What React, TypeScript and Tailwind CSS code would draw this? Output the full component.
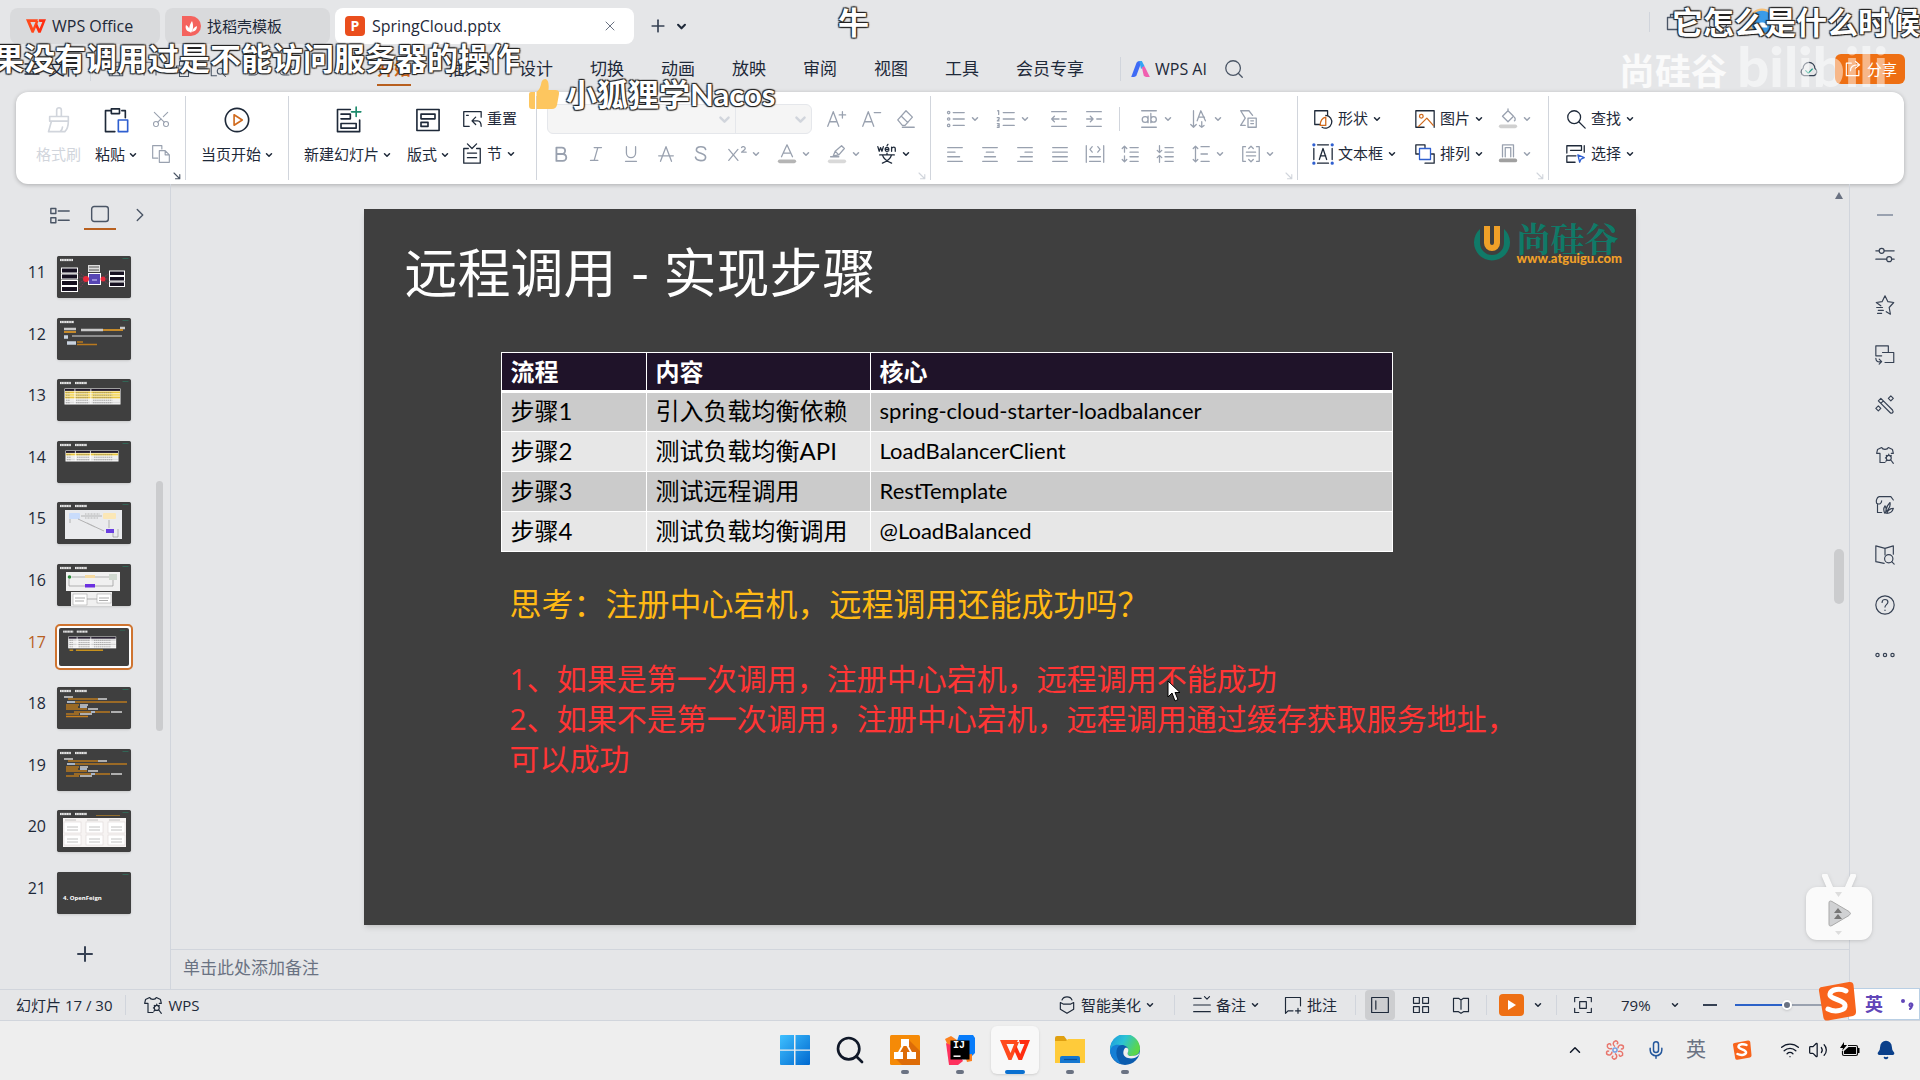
import type { ReactNode } from 'react';
import { Bell, ChevronRight, ChevronUp, Mic, Plus, Scissors, Search, Volume2, Wifi, X } from 'lucide-react';

const menuTabs = ['插入', '设计', '切换', '动画', '放映', '审阅', '视图', '工具'];

const steps = [
  { step: '步骤1', content: '引入负载均衡依赖', core: 'spring-cloud-starter-loadbalancer' },
  { step: '步骤2', content: '测试负载均衡API', core: 'LoadBalancerClient' },
  { step: '步骤3', content: '测试远程调用', core: 'RestTemplate' },
  { step: '步骤4', content: '测试负载均衡调用', core: '@LoadBalanced' },
];

interface IconProps {
  children: ReactNode;
  className?: string;
  box?: number;
}

function Icon({ children, className = 'size-6', box = 24 }: IconProps) {
  return (
    <svg
      viewBox={`0 0 ${box} ${box}`}
      className={`shrink-0 ${className}`}
      fill="none"
      stroke="currentColor"
      strokeWidth="1.4"
      strokeLinecap="round"
      strokeLinejoin="round"
      aria-hidden="true"
    >
      {children}
    </svg>
  );
}

function Caret({ className = 'size-2' }: { className?: string }) {
  return (
    <Icon box={8} className={className}>
      <path d="M1.5 2.8 4 5.3 6.5 2.8" strokeWidth="1.5" />
    </Icon>
  );
}

function Launcher({ dark = false }: { dark?: boolean }) {
  return (
    <button aria-label="更多设置" className={`absolute right-1 bottom-0 ${dark ? 'text-gray-600' : 'text-gray-300'}`}>
      <Icon box={8} className="size-2">
        <path d="M1 1l5.5 5.5M6.8 2.5v4.3H2.5" strokeWidth="1.1" />
      </Icon>
    </button>
  );
}

/* one-slot toolbar button, 35px wide; the one with a caret takes 50px */
function Tool({ label, children }: { label: string; children: ReactNode }) {
  return (
    <button aria-label={label} className="flex h-[35px] w-[35px] items-center justify-center">
      <Icon className="size-[22px]">{children}</Icon>
    </button>
  );
}

function DropTool({ label, children, dark = false }: { label: string; children: ReactNode; dark?: boolean }) {
  return (
    <button
      aria-label={label}
      className={`flex h-[35px] w-[50px] items-center gap-1 pl-2 ${dark ? 'text-gray-800' : ''}`}
    >
      <Icon className="size-[22px]">{children}</Icon>
      <Caret />
    </button>
  );
}

function TextTool({ label, children, caret = true }: { label: string; children: ReactNode; caret?: boolean }) {
  return (
    <button className="flex h-[35px] items-center gap-1 whitespace-nowrap">
      <Icon className="size-[22px]">{children}</Icon>
      <span>{label}</span>
      {caret && <Caret className="ml-px size-2" />}
    </button>
  );
}

function BigTool({ label, children, caret = true, muted = false }: { label: string; children: ReactNode; caret?: boolean; muted?: boolean }) {
  return (
    <button className={`flex flex-col items-center whitespace-nowrap ${muted ? 'text-gray-300' : ''}`}>
      <span className="flex h-[37px] items-center">
        <Icon className="size-[28px]">{children}</Icon>
      </span>
      <span className="flex h-[33px] items-center gap-1">
        {label}
        {caret && <Caret />}
      </span>
    </button>
  );
}

function WpsLogo({ className }: { className: string }) {
  return (
    <svg viewBox="0 0 30 20" className={className} aria-hidden="true">
      <path d="M0 0h18l-2 4H6.500l4 9 4.500-11h4l-7.500 18H8.500z" fill="#ff4a1c" />
      <path d="M19 0h11l-8 20h-3.500l-4-9 2-5 3.700 8L24.500 4H20z" fill="#ff2d10" />
    </svg>
  );
}

function SogouLogo({ className }: { className: string }) {
  return (
    <svg viewBox="0 0 40 40" className={className} aria-hidden="true">
      <path d="M5 6 32 1q4-.6 4.500 3L39 30q.4 4-3 5L11 39.500q-4 .6-4.600-3L2 10q-.5-3.500 3-4z" fill="#f8641c" />
      <path d="M29 10c-6-3-15-2-16 3s14 6 15 11-9 8-17 4" fill="none" stroke="#fff" strokeWidth="5" strokeLinecap="round" />
    </svg>
  );
}

function Skin() {
  return (
    <>
      <path d="M8 3 3 5.500 2 10h4v11h6M16 3l5 2.500L22 10h-2.500M8 3c1 3 7 3 8 0" />
      <circle cx="16.500" cy="15.500" r="3" />
      <path d="M16.500 11v1.500M12.500 15.500h1M19 18l3 4M13.500 12.500l1 1M19.500 12.500l-1 1M14 18.500l-1 1" />
    </>
  );
}

/* ---------- slide thumbnails ---------- */

function CodeLines({ extra }: { extra: boolean }) {
  return (
    <g>
      <path d="M7 10h9M41 12h9M23 18h8M31 22h10M54 25h11M23 27h12" stroke="#d5d5d5" strokeWidth="1.600" />
      <path d="M11 12h30M18 15h52M9 18h13M9 20h12M9 22h21M17 25h36M9 27h13" stroke="#b9791f" strokeWidth="1.500" />
      {extra && <path d="M9 29.500h22" stroke="#c8801e" strokeWidth="1.600" />}
      <path d="M10 15h8M23 20h7M34 25h4" stroke="#a9b4c4" strokeWidth="2" />
    </g>
  );
}

function MiniTable({ x, w, y, h, rows }: { x: number; w: number; y: number; h: number; rows: string[] }) {
  const rowHeight = h / rows.length;
  return (
    <g>
      <rect x={x - 0.5} y={y - 0.5} width={w + 1} height={h + 1} fill="#fff" />
      {rows.map((fill, i) => (
        <rect key={i} x={x} y={y + i * rowHeight} width={w} height={rowHeight - 0.6} fill={fill} />
      ))}
      {rows.slice(1).map((_, i) => (
        <path
          key={i}
          d={`M${x + 1} ${y + (i + 1.5) * rowHeight}h4m6 0h12m5 0h${w * 0.35}`}
          stroke="#777"
          strokeWidth=".6"
          strokeDasharray="1.500 .6"
        />
      ))}
      <path d={`M${x + w * 0.18} ${y}v${h}M${x + w * 0.47} ${y}v${h}`} stroke="#fff" strokeWidth=".8" />
    </g>
  );
}

const thumbs: { no: number; title: number; art: ReactNode }[] = [
  {
    no: 11,
    title: 13,
    art: (
      <g>
        <path d="M22 16l8 7M22 21l8 2M22 27l8-4M22 33l8-10M44 23l9-6M44 23h9M44 23l9 6" stroke="#a33a6a" strokeWidth=".6" strokeDasharray="1.500 1" />
        {[12, 18, 24.5, 30.5].map((y) => (
          <rect key={y} x="4.500" y={y} width="16" height="5" fill="#151020" stroke="#fff" />
        ))}
        {[15, 20.5, 26].map((y) => (
          <rect key={y} x="52.500" y={y} width="15" height="4.500" fill="#151020" stroke="#fff" />
        ))}
        <rect x="31" y="9" width="12" height="7" fill="#ddd" />
        <path d="M32 11h10M32 14h10" stroke="#555" />
        <rect x="31.500" y="17.500" width="12" height="11" fill="#5746b4" stroke="#fff" />
        <path d="M35 24h5" stroke="#d8d0ff" />
        <circle cx="29" cy="23" r="3" fill="#e8283a" />
        <circle cx="46" cy="23" r="2.500" fill="#e8283a" />
      </g>
    ),
  },
  {
    no: 12,
    title: 14,
    art: (
      <g>
        <path d="M7 11h12M24 12h22M63 10h5" stroke="#c9c9c9" strokeWidth="2.500" />
        <path d="M7 14h12M46 12h20" stroke="#c58a2b" strokeWidth="2" />
        <path d="M15 18h50" stroke="#8c8c8c" strokeWidth="2" />
        <path d="M7 19h4M10 25h9" stroke="#c9d3e0" strokeWidth="3.500" />
        <path d="M20 24h6M20 26.500h20" stroke="#b9791f" strokeWidth="1.300" />
      </g>
    ),
  },
  { no: 13, title: 28, art: <MiniTable x={8} w={55} y={10} h={15} rows={['#221a2c', '#e9c63f', '#f5dc72', '#e9c63f', '#eee', '#ddd']} /> },
  { no: 14, title: 28, art: <MiniTable x={9} w={52} y={10} h={10} rows={['#221a2c', '#e9c63f', '#eee', '#ddd']} /> },
  {
    no: 15,
    title: 28,
    art: (
      <g>
        <rect x="8" y="8" width="57" height="29" fill="#eaebed" />
        <rect x="12" y="11" width="11" height="6" rx="1" fill="#c9dcfb" />
        <rect x="46" y="11" width="13" height="6" rx="1" fill="#fbe7b6" />
        <rect x="49" y="27" width="8" height="4" fill="#6a3fe0" />
        <path d="M24 14h21M52 18v8M21 17l26 12M13 17v4M56 31v4h5v-8" stroke="#999" strokeWidth=".7" />
        <path d="M28 12h15M28 16h13M30 21l8 4" stroke="#b5b5b5" strokeDasharray="1 .5" />
      </g>
    ),
  },
  {
    no: 16,
    title: 28,
    art: (
      <g>
        <rect x="9" y="8" width="54" height="19" fill="#f0f0f0" />
        <rect x="14" y="28" width="41" height="14" fill="#f0f0f0" />
        <circle cx="12.500" cy="13" r="1.800" fill="#2a8a3a" />
        <path d="M15 13h13M37 13h15M56 16v6H38M28 22H12v-7M30 35h10" stroke="#888" strokeWidth=".6" />
        <rect x="28" y="11" width="10" height="3" fill="#f4d9a0" />
        <rect x="28" y="20" width="10" height="3.500" fill="#6a2fe0" />
        <rect x="52" y="10" width="8" height="6" fill="#cfd8cf" />
        <rect x="16" y="30" width="14" height="11" stroke="#999" strokeWidth=".5" fill="#fff" />
        <rect x="40" y="30" width="14" height="9" stroke="#999" strokeWidth=".5" fill="#fff" />
        <path d="M18 34h10M18 37h9M42 34h10M42 36.500h9" stroke="#888" strokeWidth=".7" />
      </g>
    ),
  },
  {
    no: 17,
    title: 28,
    art: (
      <g>
        <MiniTable x={9} w={52} y={10} h={12} rows={['#221a2c', '#d5d5d5', '#eee', '#d5d5d5', '#eee']} />
        <path d="M10 24.500h4M17 24.500h30" stroke="#c8921e" strokeWidth="1.600" />
      </g>
    ),
  },
  { no: 18, title: 28, art: <CodeLines extra /> },
  { no: 19, title: 28, art: <CodeLines extra={false} /> },
  {
    no: 20,
    title: 28,
    art: (
      <g>
        <path d="M39 5.500h24" stroke="#a87a2a" strokeWidth=".8" />
        <rect x="6" y="8" width="63" height="29" fill="#f7f4f3" />
        {[7, 29, 51].map((x) => (
          <g key={x} fill="#fff" stroke="#d8cfcf" strokeWidth=".5">
            <rect x={x} y="12" width="17" height="11" />
            <rect x={x} y="25" width="17" height="10" />
            <path d={`M${x + 1} 10h11M${x + 3} 17h11m-11 3h11m-11 9h11m-11 3h11`} stroke="#bbb" strokeWidth=".9" />
          </g>
        ))}
      </g>
    ),
  },
  { no: 21, title: 0, art: null },
];

function Thumb({ no, title, art }: { no: number; title: number; art: ReactNode }) {
  const current = no === 17;
  return (
    <li className="flex items-center gap-[11px]">
      <span className={`w-[46px] pb-[10px] text-right ${current ? 'text-[#b8601f]' : 'text-gray-800'}`}>{no}</span>
      <button
        aria-label={`幻灯片 ${no}`}
        className={`relative h-[42px] w-[74px] rounded-[3px] shadow ${
          current ? 'bg-white p-[2px] outline-2 outline-[#cf7430]' : 'bg-[#3f3f3f]'
        }`}
      >
        <svg viewBox="0 0 74 42" className="size-full rounded-[2px] bg-[#3f3f3f]" fill="none" aria-hidden="true">
          {title > 0 && (
            <>
              <path d={title > 20 ? 'M3 4h11M18 4h12' : `M3 4h${title}`} stroke="#8a8a8a" strokeWidth="2.600" />
              <path d={title > 20 ? 'M3 4h11M18 4h12' : `M3 4h${title}`} stroke="#e8e8e8" strokeWidth="2" strokeDasharray="1.200 .5" />
            </>
          )}
          <path d="M65.500 2.500h6" stroke="#2f6f5c" strokeWidth=".8" />
          {art}
        </svg>
        {no === 21 && (
          <span className="absolute bottom-3 left-[6px] text-[6px] leading-[8px] font-bold text-white">4. OpenFeign</span>
        )}
      </button>
    </li>
  );
}

/* ---------- header ---------- */

function TitleBar() {
  return (
    <header className="flex h-12 items-end pr-8 pl-[10px] text-[15px]">
      <div className="flex h-10 gap-[5px] pb-1">
        <button className="flex h-9 w-[150px] items-center gap-[6px] rounded-lg bg-[#d9dadc] px-4 text-base">
          <WpsLogo className="h-[14px] w-5" />
          WPS Office
        </button>
        <button className="flex h-9 w-[165px] items-center gap-[6px] rounded-lg bg-[#d9dadc] px-4">
          <svg viewBox="0 0 20 20" className="size-5" aria-hidden="true">
            <path d="M1 0h9a10 10 0 0 1 0 20H1z" fill="#f4635e" />
            <path d="M10 17c-3-3-2-7 1-12 2 5 1 9-1 12zM9 16c-4-1-5-4-4-7 3 2 4 4 4 7zM11 16c1-4 3-5 5-6 0 4-2 5-5 6z" fill="#fff" />
          </svg>
          找稻壳模板
        </button>
        <button className="flex h-9 w-[299px] items-center gap-[7px] rounded-lg bg-white pr-4 pl-[10px] text-base">
          <span className="flex size-5 items-center justify-center rounded-sm bg-[#ea4e1d] text-sm font-bold text-white">P</span>
          SpringCloud.pptx
          <X className="ml-auto size-4 text-gray-500" strokeWidth={1.5} />
        </button>
      </div>
      <button aria-label="新建" className="mb-3 ml-[14px] text-gray-700">
        <Plus className="size-5" strokeWidth={2} />
      </button>
      <button aria-label="标签列表" className="mb-4 ml-2">
        <Caret className="size-[11px]" />
      </button>
      <div className="mb-3 ml-auto flex items-center gap-6 text-gray-600">
        <span className="h-5 w-px bg-gray-300" />
        <Icon className="-ml-2 size-[18px]">
          <path d="M2 6h15v16H2zM6 6V2h16v16h-5" strokeWidth="1.800" />
        </Icon>
        <Icon className="size-5">
          <path d="M12 2 22 7v10l-10 5-10-5V7zM2 7l10 5 10-5" />
        </Icon>
        <svg viewBox="0 0 26 26" className="-mx-1 size-[28px]" aria-hidden="true">
          <circle cx="13" cy="13" r="11.500" fill="#3b9be8" stroke="#f6c078" strokeWidth="2" />
          <path d="M8 18c0-6 10-6 10 0" fill="#fff" />
        </svg>
        <span className="h-px w-4 bg-gray-600" />
        <span className="size-3 border border-gray-600" />
        <X className="size-4" />
      </div>
    </header>
  );
}

function MenuBar() {
  return (
    <nav className="flex h-[42px] items-center pl-6 text-[17px] whitespace-nowrap">
      <button className="flex items-center gap-2">
        <Icon className="size-4" box={16}>
          <path d="M1 3h14M1 8h14M1 13h14" />
        </Icon>
        文件
      </button>
      <span className="ml-2 h-6 w-px bg-gray-300" />
      <div className="ml-4 flex w-[270px] items-center gap-4 text-gray-600">
        <Icon className="size-[18px]"><path d="M3 3h14l4 4v14H3zM8 3v6h8V3M7 21v-7h10v7" /></Icon>
        <Icon className="size-[18px]"><path d="M4 20V3h10l6 6v11M14 3v6h6" /></Icon>
        <Icon className="size-[18px]"><path d="M6 8V2h12v6M6 17H2V8h20v9h-4M6 14h12v8H6z" /></Icon>
        <Icon className="size-[18px]"><path d="M10 21H3V3h16v6" /><circle cx="15" cy="15" r="4" /><path d="m18 18 4 4" /></Icon>
        <Icon className="size-[18px]"><path d="M4 9h11a5 5 0 0 1 0 11H8M8 5 4 9l4 4" /></Icon>
        <Icon className="size-[18px]"><path d="M20 9H9a5 5 0 0 0 0 11h7M16 5l4 4-4 4" /></Icon>
      </div>
      <div className="flex items-center gap-[37px]">
        <a href="#start" className="relative font-bold text-[#cc6418]">
          开始
          <span className="absolute inset-x-0 -bottom-1 h-[2px] bg-[#b8601f]" />
        </a>
        {menuTabs.map((tab) => (
          <a key={tab} href={`#${tab}`}>{tab}</a>
        ))}
        <a href="#vip">会员专享</a>
      </div>
      <span className="ml-9 h-6 w-px bg-gray-300" />
      <button className="ml-[10px] flex items-center gap-1 text-base">
        <svg viewBox="0 0 22 18" className="h-4 w-5" aria-hidden="true">
          <path d="M0 18 6 2q1-2 3-2h3L6 16q-1 2-3 2z" fill="#3f6bf5" />
          <path d="M9 0h3l3 6-4 3z" fill="#34a4f4" />
          <path d="m12 7 3-1 6 12h-4q-2 0-3-2z" fill="#f05fb0" />
        </svg>
        WPS AI
      </button>
      <button aria-label="搜索" className="ml-4">
        <Search className="size-[22px] text-gray-600" strokeWidth={1.4} />
      </button>
      <div className="mr-[15px] ml-auto flex items-center gap-4 text-[15px]">
        <Icon className="size-5 text-gray-700">
          <path d="M6 20a5 5 0 0 1-1-9 7 7 0 0 1 14 0 5 5 0 0 1-1 9z" />
          <path d="m8 14 3 3 5-5" stroke="#1a9a80" />
        </Icon>
        <button className="flex h-[30px] items-center gap-1 rounded-md bg-[#ee6f13] px-2 text-white">
          <Icon className="size-5">
            <path d="M10 5H4v15h15v-6M9 14c0-5 4-7 9-7M15 3l5 4-5 4" />
          </Icon>
          分享
        </button>
      </div>
    </nav>
  );
}

function Ribbon() {
  return (
    <section className="mx-4 flex h-[92px] shrink-0 rounded-xl bg-white text-[15px] whitespace-nowrap text-gray-800 shadow-[0_1px_4px_rgba(0,0,0,0.25)] [&>div]:relative [&>div]:my-1 [&>div]:flex [&>div]:border-r [&>div]:border-gray-300 [&>div]:pt-[5px]">
      <div className="w-[170px] gap-[14px] pl-5">
        <BigTool label="格式刷" caret={false} muted>
          <path d="M10 9V3.500a2 2 0 0 1 4 0V9M4 9h16v4H4zM5.500 13 3 22h14c2-2 3-5 3-9M13 22c1-1 2-3 2-4" />
        </BigTool>
        <BigTool label="粘贴">
          <path d="M7 4H3v18h8M17 4h3v6M8 2.500h7v4H8z" />
          <path d="M14 12h8v10h-8z" stroke="#2f5fd0" />
        </BigTool>
        <div className="flex flex-col text-gray-400">
          <button aria-label="剪切" className="flex h-[35px] items-center"><Scissors className="size-5 -rotate-90" strokeWidth={1.3} /></button>
          <button aria-label="复制" className="flex h-[35px] items-center">
            <Icon className="size-5"><path d="M8 17H2V2h11v4M10 8h7l5 5v9H10zM17 8v5h5" /></Icon>
          </button>
        </div>
        <Launcher dark />
      </div>

      <div className="w-[103px] justify-center">
        <BigTool label="当页开始">
          <circle cx="12" cy="12" r="10" />
          <path d="M9.500 7.500v9l7-4.500z" stroke="#d06a1d" />
        </BigTool>
      </div>

      <div className="w-[248px] gap-4 pl-[15px]">
        <BigTool label="新建幻灯片">
          <path d="M14 3H3v19h19V12M6 7h8v4H6M6 15h13v4H6z" />
          <path d="M19 1v8M15 5h8" stroke="#1c8a6c" />
        </BigTool>
        <BigTool label="版式">
          <path d="M2.500 3h19v18h-19zM6 7h12v4H6zM6 14h6v3.500H6z" />
        </BigTool>
        <div className="-ml-1 flex flex-col">
          <TextTool label="重置" caret={false}>
            <path d="M9 20H3V4h19v6M6 8h2M13 14h5c2 0 4 2 4 6M16 10l-4 4 4 4" />
          </TextTool>
          <TextTool label="节">
            <path d="M8 6H3v16h18V6h-4M7 1l5 5 5-5M7 11h10M7 16h10" />
          </TextTool>
        </div>
      </div>

      <div className="w-[394px] flex-col pl-[6px] text-gray-400">
        <div className="flex items-center">
          <div className="mr-[6px] ml-1 flex h-[30px] rounded-md border border-gray-200 bg-[#f5f5f5] text-gray-300">
            <label className="relative block w-[188px] border-r border-gray-200">
              <select aria-label="字体" className="size-full appearance-none bg-transparent"><option></option></select>
              <Caret className="absolute top-2 right-1 size-[13px]" />
            </label>
            <label className="relative block w-[75px]">
              <select aria-label="字号" className="size-full appearance-none bg-transparent"><option></option></select>
              <Caret className="absolute top-2 right-1 size-[13px]" />
            </label>
          </div>
          <Tool label="增大字号"><path d="M3 20 9 4l6 16M5 15h8M19 4v7M15.500 7.500h7" /></Tool>
          <Tool label="减小字号"><path d="M3 20 9 4l6 16M5 15h8M15.500 5h7" /></Tool>
          <Tool label="清除格式"><path d="m3 13 9-10 7 7-8 9H8zM7 9l7 7M8 21h13" /></Tool>
        </div>
        <div className="flex">
          <Tool label="加粗"><path d="M7 5h6a3.500 3.500 0 0 1 0 7H7zM7 12h7a3.700 3.700 0 0 1 0 7.500H7z" strokeWidth="2" /></Tool>
          <Tool label="倾斜"><path d="M10 5h8M6 19h8M14 5l-4 14" /></Tool>
          <Tool label="下划线"><path d="M7 4v7a5 5 0 0 0 10 0V4M6 20h12" /></Tool>
          <Tool label="删除线"><path d="M6 20 12 4l6 16M4 14h16" /></Tool>
          <Tool label="阴影"><path d="M17 7c-1-4-10-4-10 .5s10 3 10 8-10 5-11 0" strokeWidth="1.800" /></Tool>
          <DropTool label="上标"><path d="M3 7l10 12M13 7 3 19M17 5c1-2 4-1 4 1s-4 3-4 4h5" /></DropTool>
          <DropTool label="字体颜色"><path d="M6 15 12 2l6 13M8 11h8" /><path d="M4 20h16" strokeWidth="4" stroke="#b5b5b5" /></DropTool>
          <DropTool label="突出显示"><path d="m8 14 2-5 7-6 3 3-6 7zM5 15h9M10 9l4 4" /><path d="M4 20h16" strokeWidth="4" stroke="#d9d9d9" /></DropTool>
          <DropTool label="拼音指南" dark>
            <path d="M2 4l1.500 5L5 5l1.500 4L8 4M10 7h4c0-3-4-3-4 0s3 2 4 1.500M13 1.500 12 3M17 9V4.500M17 6c1-2 4-2 4 0v3M4 13h16M12 11v2M7 13c1 4 5 7 10 9M17 13c-1 4-5 7-10 9" />
          </DropTool>
        </div>
        <Launcher />
      </div>

      <div className="w-[367px] flex-col pl-[6px] text-gray-400">
        <div className="flex items-center">
          <DropTool label="项目符号"><path d="M9 5h12M9 12h12M9 19h12" /><circle cx="4" cy="5" r="1.300" /><circle cx="4" cy="12" r="1.300" /><circle cx="4" cy="19" r="1.300" /></DropTool>
          <DropTool label="编号"><path d="M9 5h12M9 12h12M9 19h12M3 3h1v4M2.500 10.500h2v1.500l-2 2h2M2.500 17h2v4h-2M3 19h1.500" /></DropTool>
          <span className="w-1" />
          <Tool label="减少缩进"><path d="M4 4h16M4 20h16M4 12h8M7 9l-3 3 3 3M15 12h5" /></Tool>
          <Tool label="增加缩进"><path d="M4 4h16M4 20h16M4 12h7M8 9l3 3-3 3M15 12h5" /></Tool>
          <span className="mr-[10px] ml-2 h-6 w-px bg-gray-300" />
          <DropTool label="文字间距"><path d="M4 3h16M4 21h16M11 9v7M11 12.500a3.200 3.200 0 1 1-6.400 0 3.200 3.200 0 0 1 6.400 0M14 6v10M14 12.500a3 3 0 1 0 6 0 3 3 0 0 0-6 0" /></DropTool>
          <DropTool label="文字方向"><path d="M6 3v18M3 18l3 3 3-3M10 14l4-11 5 11M12 10h6M15 15v6M12.500 19l2.500 2 2.500-2" /></DropTool>
          <Tool label="转换图示"><path d="M13 3H4l5 8-5 8h5M13 3l4 5M12 11h9v10h-9zM15 14h3M15 17h3" /></Tool>
        </div>
        <div className="flex">
          <Tool label="左对齐"><path d="M4 5h16M4 10h8M4 15h13M4 20h16" /></Tool>
          <Tool label="居中"><path d="M4 5h16M8 10h8M6 15h12M4 20h16" /></Tool>
          <Tool label="右对齐"><path d="M4 5h16M12 10h8M7 15h13M4 20h16" /></Tool>
          <Tool label="两端对齐"><path d="M4 5h16M4 10h16M4 15h16M4 20h16" /></Tool>
          <Tool label="分散对齐"><path d="M2.500 3v18M21.500 3v18M6 15h12M6 20h12M9 4 6.500 7 9 10M15 4l2.500 3-2.500 3" /></Tool>
          <Tool label="增大段距"><path d="M6 10V4M3.500 6 6 3.500 8.500 6M6 14v6M3.500 18 6 20.500 8.500 18M12 5h9M12 10h9M12 15h9M12 20h9" /></Tool>
          <Tool label="减小段距"><path d="M6 3v7M3.500 8 6 10.500 8.500 8M6 21v-7M3.500 16 6 13.500 8.500 16M12 5h9M12 10h9M12 15h9M12 20h9" /></Tool>
          <DropTool label="行距"><path d="M6 4v16M3.500 6 6 3.500 8.500 6M3.500 18 6 20.500 8.500 18M12 4h9M12 12h7M12 20h9" /></DropTool>
          <DropTool label="对齐文本"><path d="M6 4H3v16h3M18 4h3v16h-3M7 10h10M7 14h10M9.500 6 12 3.500 14.500 6M9.500 18l2.500 2.500 2.500-2.500" /></DropTool>
        </div>
        <Launcher />
      </div>

      <div className="w-[251px] gap-[18px] pl-[14px]">
        <div className="flex flex-col items-start">
          <TextTool label="形状">
            <path d="M9 18H3V3h14v5" />
            <path d="M15 8a7 7 0 1 1-4 13" />
            <path d="M9 19c0-5 2-8 6-9v9z" stroke="#d06a1d" />
          </TextTool>
          <TextTool label="文本框">
            <path d="M6 2h12M6 22h12M2 6v12M22 6v12M8 18l4-12 4 12M9 14h6" />
            <path d="M2 2h.1M22 2h.1M2 22h.1M22 22h.1" stroke="#2f5fd0" strokeWidth="3.500" />
          </TextTool>
        </div>
        <div className="flex flex-col items-start">
          <TextTool label="图片">
            <path d="M11 21H2V3h20v18" />
            <circle cx="8" cy="9" r="2" stroke="#d06a1d" />
            <path d="m5 20 9-9 7 8" stroke="#d06a1d" />
          </TextTool>
          <TextTool label="排列">
            <path d="M5 12H2V2h10v3M12 22h10V12h-3" />
            <path d="M6 6h12v12H6z" stroke="#2f5fd0" />
          </TextTool>
        </div>
        <div className="-ml-3 flex flex-col text-gray-400">
          <DropTool label="填充"><path d="m6 9 6-6 6 6-6 6zM12 3V1M19 10c2 3 0 4 0 4" /><path d="M4 20h16" strokeWidth="4" stroke="#d0d0d0" /></DropTool>
          <DropTool label="轮廓"><path d="M6 15V2h12v13M9 15V5h6v10" /><path d="M4 19h16" strokeWidth="4" stroke="#a0a0a0" /></DropTool>
        </div>
        <Launcher />
      </div>

      <div className="flex-col items-start border-r-0! pl-4">
        <TextTool label="查找">
          <circle cx="10" cy="10" r="7" />
          <path d="m15 15 7 7" />
        </TextTool>
        <TextTool label="选择">
          <path d="M2 11V3h16v5H6M21 3v7M2 14v7h9M2 14h10" />
          <path d="m14 13 7 3-3.500 1.500L16 21z" stroke="#2f5fd0" />
        </TextTool>
      </div>
    </section>
  );
}

/* ---------- workspace ---------- */

function SlidePanel() {
  return (
    <aside className="relative flex w-[171px] shrink-0 flex-col border-r border-gray-300">
      <div className="flex h-[46px] items-end pl-[50px] text-gray-600">
        <button aria-label="大纲" className="mb-1">
          <Icon className="size-5">
            <path d="M1 3h6v6H1zM1 14h6v6H1zM10 6h13M10 17h13" strokeWidth="1.700" />
          </Icon>
        </button>
        <button aria-label="幻灯片" className="ml-[14px] border-b-2 border-[#b8601f] px-[6px] pb-1">
          <Icon className="size-5">
            <rect x="2" y="3" width="20" height="18" rx="3" strokeWidth="1.700" />
          </Icon>
        </button>
        <button aria-label="展开" className="mb-1 ml-[13px]">
          <ChevronRight className="size-[22px]" strokeWidth={1.5} />
        </button>
      </div>
      <ol className="mt-[26px] flex h-[658px] flex-col justify-between text-base">
        {thumbs.map((t) => (
          <Thumb key={t.no} {...t} />
        ))}
      </ol>
      <button aria-label="新建幻灯片" className="mt-7 self-center text-gray-700">
        <Plus className="size-6" strokeWidth={2} />
      </button>
      <span className="absolute top-[297px] right-[7px] h-[250px] w-[7px] rounded-full bg-[#cbccce]" />
    </aside>
  );
}

function Slide() {
  return (
    <article className="relative aspect-video h-full bg-[#3f3f3f] pt-7 pl-[41px] text-white shadow-md">
      <h1 className="font-[Lato,Noto_Sans_CJK_SC,sans-serif] text-[53px] leading-[72px]">远程调用 - 实现步骤</h1>
      <div className="absolute top-[15px] right-[14px] flex gap-[6px]">
        <svg viewBox="0 0 36 38" className="h-[38px] w-9" aria-hidden="true">
          <path d="M6 5a18 18 0 1 0 24 0v14a12 12 0 0 1-24 0z" fill="#107a68" />
          <path d="M13 2v17a5 5 0 0 0 10 0V2" fill="none" stroke="#f0a028" strokeWidth="6" />
        </svg>
        <p className="w-[106px] text-[#107a68]">
          <span className="block font-[Noto_Serif_CJK_SC,Noto_Sans_CJK_SC,serif] text-[34px] leading-7 font-bold">尚硅谷</span>
          <span className="block font-[Lato,sans-serif] text-[13px] leading-3 font-black text-[#f0a028]">www.atguigu.com</span>
        </p>
      </div>

      <div className="mt-[43px] pr-24 pl-24">
        <table className="w-[892px] max-w-full table-fixed border-collapse border border-white text-left text-2xl font-normal text-black">
          <colgroup>
            <col className="w-[145px]" />
            <col className="w-[224px]" />
            <col />
          </colgroup>
          <thead>
            <tr className="h-[39px] border-b-3 border-white bg-[#1f1329] text-white">
              <th className="border-r border-white px-[9px] leading-9">流程</th>
              <th className="border-r border-white px-[9px] leading-9">内容</th>
              <th className="px-[9px] leading-9">核心</th>
            </tr>
          </thead>
          <tbody className="font-[Lato,Noto_Sans_CJK_SC,sans-serif]">
            {steps.map((row) => (
              <tr key={row.step} className="h-10 border-b border-white odd:bg-[#cbcbcb] even:bg-[#e7e7e7]">
                <td className="border-r border-white px-[9px] pb-[2px] leading-9">{row.step}</td>
                <td className="border-r border-white px-[9px] pb-[2px] leading-9">{row.content}</td>
                <td className="px-[9px] pb-[2px] text-[22px] leading-9">{row.core}</td>
              </tr>
            ))}
          </tbody>
        </table>
        <p className="mt-8 pl-[9px] text-[32px] leading-10 text-[#ffb914]">思考：注册中心宕机，远程调用还能成功吗？</p>
        <div className="mt-[35px] pl-[9px] text-[30px] leading-10 text-[#ff3535]">
          <p>1、如果是第一次调用，注册中心宕机，远程调用不能成功</p>
          <p>2、如果不是第一次调用，注册中心宕机，远程调用通过缓存获取服务地址，可以成功</p>
        </div>
      </div>

      <svg viewBox="0 0 14 22" className="absolute top-[471px] left-[803px] h-[22px] w-[14px]" aria-hidden="true">
        <path d="M1 1v16l4-4 3 8 3-1.500-3-7h5z" fill="#fff" stroke="#000" />
      </svg>
    </article>
  );
}

function SideBar() {
  const items: { label: string; art: ReactNode }[] = [
    { label: '属性', art: <><path d="M1 7h4M11 7h12M1 17h13M20 17h3" /><circle cx="8" cy="7" r="3" /><circle cx="17" cy="17" r="3" /></> },
    { label: '收藏', art: <><path d="M7 13 1.500 9l7-1L12 1l3.500 7 7 1-5.500 6 1.500 8-5-3" /><path d="M2 15h7M4 18.500h6M3 22h5" /></> },
    { label: '切换', art: <><path d="M8 13H1V1h15v7M9 9h13.500v12H12M1 16c0 3 2 5 6 4M5 17l3 3-3 3" /></> },
    { label: '动画', art: <><path d="m4 7 3-3 14 14c2 3-1 5-3 3zM7 10l3-3M19 1l3 3-3 3-3-3zM4 13l3 3-3 3-3-3z" /></> },
    { label: '皮肤', art: <Skin /> },
    { label: '模板', art: <><path d="M3 11v10h5M2 10c-1-3 0-7 3-8h14l3 4M2 10c3 2 6 0 6-3M12 22c-2-3-2-6 0-9 2 3 2 6 0 9zM13 20c0-6 3-9 5-11 1 5-1 8-5 11zM14 22c2-5 5-6 8-6-1 4-4 6-8 6z" /></> },
    { label: '查阅', art: <><path d="M11 22 1 20V1l11 3 10-3v10M12 4v8" /><circle cx="16.500" cy="16.500" r="5" /><path d="m20 20 3 3" /></> },
    { label: '帮助', art: <><circle cx="12" cy="12" r="11" /><path d="M8.500 9c0-5 7-4.500 7-.5 0 3-3.500 3-3.500 6M12 18v.5" /></> },
    { label: '更多', art: <><circle cx="3" cy="12" r="2" /><circle cx="12" cy="12" r="2" /><circle cx="21" cy="12" r="2" /></> },
  ];
  return (
    <aside className="flex w-[71px] shrink-0 flex-col items-center border-l border-gray-300 pt-[29px] text-gray-700">
      <button aria-label="收起" className="flex h-5 items-start">
        <span className="mt-px h-[2px] w-4 bg-gray-400" />
      </button>
      <div className="mt-3 flex flex-col gap-[30px]">
        {items.map((item) => (
          <button key={item.label} aria-label={item.label}>
            <Icon className="size-5">{item.art}</Icon>
          </button>
        ))}
      </div>
    </aside>
  );
}

function StatusBar() {
  return (
    <footer className="flex h-8 shrink-0 items-center border-y border-gray-300 pl-4 text-[15px] whitespace-nowrap text-gray-800 [&_i]:h-5 [&_i]:w-px [&_i]:bg-gray-300">
      <span>幻灯片 17 / 30</span>
      <i className="ml-3" />
      <button className="ml-[17px] flex items-center gap-[6px]">
        <Icon className="size-5"><Skin /></Icon>
        WPS
      </button>
      <div className="mr-[81px] ml-auto flex items-center">
        <button className="flex items-center gap-1">
          <Icon className="size-5"><path d="M4 9v8l8 5 8-5V9M4 9l4 2h8l4-2M6 6c2-5 10-5 12 0" /></Icon>
          智能美化
          <Caret className="ml-px size-2" />
        </button>
        <i className="mr-[17px] ml-5" />
        <button className="flex items-center gap-1">
          <Icon className="size-5"><path d="M2 4h9M2 12h20M2 20h20M15 2l3 3 3-3" /></Icon>
          备注
          <Caret className="ml-px size-2" />
        </button>
        <button className="ml-6 flex items-center gap-1">
          <Icon className="size-5"><path d="M12 19H6l-3 3V3h18v10M18 16v6M15 19h6" /></Icon>
          批注
        </button>
        <i className="mr-[9px] ml-[18px]" />
        <button aria-label="普通视图" className="flex h-[30px] w-[30px] items-center justify-center rounded-sm bg-[#cdced0]">
          <Icon className="size-5"><path d="M2 3h20v18H2zM7 7v10" /></Icon>
        </button>
        <button aria-label="幻灯片浏览" className="ml-4">
          <Icon className="size-5"><path d="M3 3h7v7H3zM14 3h7v7h-7zM3 14h7v7H3zM14 14h7v7h-7z" /></Icon>
        </button>
        <button aria-label="阅读视图" className="ml-5">
          <Icon className="size-5"><path d="M9 20H3V4h6l3 2 3-2h6v16h-6l-3 2zM12 6v11" /></Icon>
        </button>
        <i className="mr-3 ml-[15px]" />
        <button aria-label="放映" className="flex h-[22px] w-[25px] items-center justify-center rounded-[4px] bg-[#ee6f13]">
          <svg viewBox="0 0 8 10" className="h-[10px] w-2 fill-white" aria-hidden="true"><path d="M0 0l8 5-8 5z" /></svg>
        </button>
        <Caret className="ml-[10px] size-2" />
        <i className="mr-4 ml-[14px]" />
        <button aria-label="适应窗口">
          <Icon className="size-5"><path d="M2 8V3h5M17 3h5v5M22 16v5h-5M7 21H2v-5M8 8h8v8H8z" /></Icon>
        </button>
        <span className="ml-7 w-[34px]">79%</span>
        <Caret className="ml-4 size-2" />
        <button aria-label="缩小" className="mr-[18px] ml-6 h-[2px] w-[14px] bg-gray-700" />
        <input
          type="range"
          aria-label="缩放"
          defaultValue={50}
          className="h-[2px] w-[104px] appearance-none bg-linear-to-r from-[#2c62c8] from-50% to-gray-400 to-50% [&::-webkit-slider-thumb]:size-[10px] [&::-webkit-slider-thumb]:appearance-none [&::-webkit-slider-thumb]:rounded-full [&::-webkit-slider-thumb]:border-2 [&::-webkit-slider-thumb]:border-white [&::-webkit-slider-thumb]:bg-gray-500 [&::-webkit-slider-thumb]:shadow"
        />
      </div>
    </footer>
  );
}

function TaskIcon({ label, children, dot = true, active = false }: { label: string; children: ReactNode; dot?: boolean; active?: boolean }) {
  return (
    <button
      aria-label={label}
      className={`relative flex size-12 items-center justify-center rounded-md ${active ? 'bg-[#f8f8f8] shadow-sm' : ''}`}
    >
      {children}
      {dot && !active && <span className="absolute bottom-0 h-1 w-2 rounded-full bg-gray-500" />}
      {active && <span className="absolute bottom-0 h-1 w-5 rounded-full bg-[#0a70d0]" />}
    </button>
  );
}

function TaskBar() {
  return (
    <footer className="grid h-[59px] shrink-0 grid-cols-[1fr_auto_1fr] items-center bg-[#eeeeee] pb-px">
      <span />
      <div className="flex gap-[7px]">
        <TaskIcon label="开始菜单" dot={false}>
          <svg viewBox="0 0 30 30" className="size-[30px]" aria-hidden="true">
            <defs>
              <linearGradient id="win" x1="0" y1="0" x2="1" y2="1">
                <stop offset="0" stopColor="#3fc0ff" />
                <stop offset="1" stopColor="#0068cf" />
              </linearGradient>
            </defs>
            <path d="M1 0h13v14.500H0V1q0-1 1-1zM15.500 0H29q1 0 1 1v13.500H15.500zM0 15.800h14V30H1q-1 0-1-1zM15.500 15.800H30V29q0 1-1 1H15.500z" fill="url(#win)" />
          </svg>
        </TaskIcon>
        <TaskIcon label="搜索" dot={false}>
          <Search className="size-[32px] text-gray-900" strokeWidth={2} />
        </TaskIcon>
        <TaskIcon label="draw.io">
          <svg viewBox="0 0 30 30" className="size-[30px]" aria-hidden="true">
            <rect width="30" height="30" rx="1.500" fill="#f58a07" />
            <path d="m19 5 11 11v14H12l-7-7z" fill="#dd6c08" />
            <path d="m13 10-5 9M17 10l5 9" stroke="#fff" strokeWidth="1.800" />
            <path d="M11 4h8v7h-8zM4 17h9v7H4zM17 17h9v7h-9z" fill="#fff" />
          </svg>
        </TaskIcon>
        <TaskIcon label="IntelliJ IDEA">
          <span className="relative flex">
            <svg viewBox="0 0 30 30" className="size-[30px]" aria-hidden="true">
              <path d="M0 4 6 1l6 4-5 14z" fill="#fc801d" />
              <path d="M1 8 10 12l8 14-5 4H4z" fill="#fe315d" />
              <path d="M14 0h14l2 3v15l-7 7-13-13z" fill="#087cfa" />
              <path d="m20 20 7-1v7l-5 1z" fill="#fc801d" />
              <rect x="5.500" y="5.500" width="19" height="19" />
              <path d="M8.500 21.200h7" stroke="#fff" strokeWidth="1.500" />
            </svg>
            <span className="absolute top-[6px] left-2 font-[Liberation_Mono,monospace] text-[10px] leading-[10px] font-bold text-white">IJ</span>
          </span>
        </TaskIcon>
        <TaskIcon label="WPS" active>
          <WpsLogo className="h-5 w-[30px]" />
        </TaskIcon>
        <TaskIcon label="文件资源管理器">
          <svg viewBox="0 0 30 28" className="h-7 w-[30px]" aria-hidden="true">
            <path d="M0 2q0-2 2-2h7l3 4v6H0z" fill="#e0a010" />
            <path d="M0 5h11l2-2h17v24H0z" fill="#ffcb3a" />
            <path d="M5 27v-5q0-2 2-2h16q2 0 2 2v5z" fill="#1577d0" />
            <path d="M9 23.500h13" stroke="#0b4f9a" strokeWidth="1.200" />
          </svg>
        </TaskIcon>
        <TaskIcon label="Edge">
          <svg viewBox="0 0 30 30" className="size-[30px]" aria-hidden="true">
            <defs>
              <linearGradient id="edge" x1="0" y1="0" x2="1" y2=".4">
                <stop offset="0" stopColor="#1a96e0" />
                <stop offset=".5" stopColor="#2cc3d4" />
                <stop offset="1" stopColor="#5bd64a" />
              </linearGradient>
            </defs>
            <circle cx="15" cy="15" r="15" fill="#0b5cae" />
            <path d="M0 15A15 15 0 0 1 30 13c0 6-4 8-9 8-3 0-4-2-3-4 1-4-2-7-6-7-6 0-11 4-12 8z" fill="url(#edge)" />
            <path d="M0 16c1-5 5-7 10-6-5 3-5 12 1 19A15 15 0 0 1 0 16z" fill="#157fd6" />
            <path d="M15 13c-3 4-2 9 3 10 4 1 8 0 10.500-2.500l1.500-3.500c-2 3-5 4-9 4-3 0-4-2-3-4 1-2 0-5-3-4z" fill="#eee" />
          </svg>
        </TaskIcon>
      </div>
      <div className="flex items-center justify-end pr-6 text-gray-900">
        <ChevronUp className="mr-[21px] size-[18px]" />
        <svg viewBox="0 0 24 24" className="mr-[21px] size-5" fill="none" stroke="#e8756c" strokeWidth="1.800" aria-hidden="true">
          {[0, 60, 120, 180, 240, 300].map((a) => (
            <path key={a} d="M12 8c-3-2-3-6 1-7 3 1 3 3 1 4" transform={`rotate(${a} 12 12)`} />
          ))}
          <circle cx="12" cy="12" r="2.500" stroke="#7aa0e0" />
        </svg>
        <Mic className="mr-5 size-5 text-[#24579c]" strokeWidth={1.800} />
        <span className="mr-[26px] text-xl text-gray-500">英</span>
        <SogouLogo className="mr-7 size-5" />
        <Wifi className="mr-2 size-5" strokeWidth={1.600} />
        <Volume2 className="mr-3 size-5" strokeWidth={1.500} />
        <svg viewBox="0 0 20 16" className="mr-4 h-4 w-5" aria-hidden="true">
          <path d="M8 3.500h8q1.500 0 1.500 1.500v7q0 1.500-1.500 1.500H4q-1.500 0-1.500-1.500V9" fill="none" stroke="#111" strokeWidth="1.200" />
          <path d="M8.500 5H16v7H4V9zM18 6h1.500v5H18z" />
          <path d="M4 0 0 6h3L2 9l5-6H4z" />
        </svg>
        <Bell className="size-5 fill-[#0a3f8a] text-[#0a3f8a]" />
      </div>
    </footer>
  );
}

/* ---------- bullet comments floating over the window ---------- */

const danmaku =
  'absolute flex items-center text-[31px] leading-10 font-bold whitespace-nowrap text-white [text-shadow:1px_1px_1px_#222,-1px_-1px_1px_#222,1px_-1px_1px_#222,-1px_1px_1px_#222]';

function Overlay() {
  return (
    <div className="pointer-events-none absolute inset-0 overflow-hidden font-[Lato,Noto_Sans_CJK_SC,sans-serif]">
      <p className={`${danmaku} top-[38px] -left-[7px]`}>果没有调用过是不能访问服务器的操作</p>
      <p className={`${danmaku} top-[2px] left-[838px]`}>牛</p>
      <p className={`${danmaku} top-[2px] left-[1672px]`}>它怎么是什么时候</p>
      <p className={`${danmaku} top-[74px] left-[529px] gap-[7px]`}>
        <svg viewBox="0 0 30 30" className="size-[30px]" aria-hidden="true">
          <path d="M0 15q0-2 2-2h4v17H3q-3 0-3-3zM7.500 13q4-3 5-10 1-3 4-3 4 1 3 11h7q4 0 3.500 4L28 26q-1 4-5 4H7.500z" fill="#fdc65f" />
        </svg>
        小狐狸学Nacos
      </p>
      <p className="absolute top-[49px] right-[193px] text-[36px] leading-11 font-bold text-white/80">尚硅谷</p>
      <p className="absolute top-[36px] right-[32px] text-[56px] leading-15 font-black text-white/50">bilibili</p>

      <div className="absolute right-[47px] bottom-[140px]">
        <svg viewBox="0 0 68 66" className="h-[66px] w-[68px] drop-shadow" aria-hidden="true">
          <path d="m20 2 6 14M48 2l-6 14" stroke="#fafafa" strokeWidth="6" strokeLinecap="round" />
          <rect x="1" y="13" width="66" height="53" rx="11" fill="#fafafa" />
          <path d="M24 29q0-3 3-1.500l17 10q3 2 0 4l-17 10q-3 1.500-3-1.500z" fill="#d0d1d3" stroke="#aaa" />
          <path d="m33 34 4 5h-8zM33 40l4 5h-8z" fill="#777" />
          <path d="M30 18h7l-3.500 5zM30 57h7l-3.500 4z" fill="#ddd" />
        </svg>
      </div>

      <div className="absolute right-0 bottom-[60px] flex h-8 w-[72px] items-center justify-between border border-[#b9cfe4] bg-white pr-1 pl-4 text-lg font-bold text-[#6146b8]">
        <SogouLogo className="absolute -top-2 -left-8 size-10" />
        英
        <Icon className="size-4" box={16}>
          <circle cx="4" cy="5" r="2" fill="currentColor" stroke="none" />
          <path d="M12 7.500a1.500 1.500 0 1 1-.1 0M13 9q0 3-2 4" strokeWidth="2" />
        </Icon>
      </div>
    </div>
  );
}

export default function App() {
  return (
    <div className="relative flex h-screen flex-col overflow-hidden bg-[#e5e6e8] font-[Open_Sans,Noto_Sans_CJK_SC,sans-serif] text-gray-800">
      <TitleBar />
      <MenuBar />
      <div className="h-[2px] shrink-0" />
      <Ribbon />
      <main className="flex min-h-0 flex-1">
        <SlidePanel />
        <div className="flex min-w-0 flex-1 flex-col">
          <div className="flex min-h-0 flex-1">
            <div className="flex min-w-0 flex-1 justify-center pt-[25px] pb-6">
              <Slide />
            </div>
            <div className="relative flex w-5 flex-col items-center pt-2">
              <svg viewBox="0 0 8 7" className="h-[7px] w-2 fill-gray-500" aria-hidden="true"><path d="M4 0l4 7H0z" /></svg>
              <span className="mt-[350px] h-[55px] w-[10px] rounded-full bg-[#cbccce]" />
            </div>
          </div>
          <label className="block h-10 border-t border-gray-300 px-3">
            <input
              aria-label="备注"
              placeholder="单击此处添加备注"
              className="h-[34px] w-full bg-transparent text-[17px] outline-none placeholder:text-gray-500"
            />
          </label>
        </div>
        <SideBar />
      </main>
      <StatusBar />
      <TaskBar />
      <Overlay />
    </div>
  );
}
